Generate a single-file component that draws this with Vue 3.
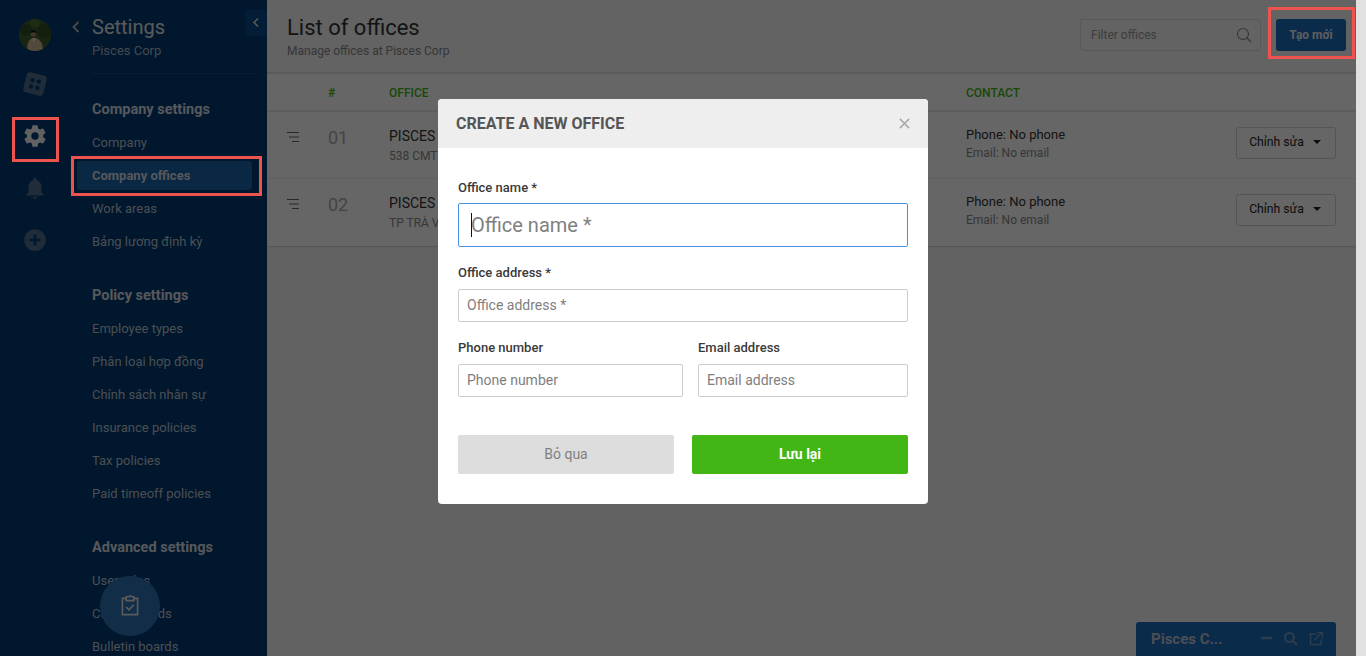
<script setup>
const sections = [
  { title: 'Company settings', items: ['Company', 'Company offices', 'Work areas', 'Bảng lương định kỳ'] },
  { title: 'Policy settings', items: ['Employee types', 'Phân loại hợp đồng', 'Chính sách nhân sự', 'Insurance policies', 'Tax policies', 'Paid timeoff policies'] },
  { title: 'Advanced settings', items: ['User roles', 'Custom fields', 'Bulletin boards'] }
]

const offices = [
  { no: '01', name: 'PISCES CORP', address: '538 CMT8, Quận 3' },
  { no: '02', name: 'PISCES TRÀ VINH', address: 'TP TRÀ VINH' }
]
</script>

<template>
  <div class="page">
    <aside class="rail">
      <svg class="avatar" viewBox="0 0 32 32">
        <circle cx="16" cy="16" r="16" fill="#3f5c2e" />
        <circle cx="7" cy="11" r="6" fill="#2f4c25" />
        <circle cx="25" cy="12" r="7" fill="#334f25" />
        <circle cx="16" cy="4" r="5" fill="#526d35" />
        <clipPath id="avatar-clip"><circle cx="16" cy="16" r="16" /></clipPath>
        <g clip-path="url(#avatar-clip)">
          <path d="M8 32c0-8 2-13 7-13s9 4 9 13z" fill="#c9b696" />
          <path d="M13 19l2 5 2-5z" fill="#e8e2d6" />
        </g>
        <circle cx="14.500" cy="15" r="2.800" fill="#a9826b" />
        <path d="M11.500 14c0-4 6-4 6 0-2-1-4-1-6 0z" fill="#141414" />
      </svg>
      <svg class="rail-icon dim" viewBox="0 0 24 24">
        <g transform="rotate(14 12 12)">
          <rect x="2.500" y="2.500" width="19" height="19" rx="3" fill="currentColor" />
          <circle cx="9" cy="9" r="2" fill="#023a72" />
          <circle cx="15" cy="9" r="2" fill="#023a72" />
          <circle cx="9" cy="15" r="2" fill="#023a72" />
          <circle cx="15" cy="15" r="2" fill="#023a72" />
        </g>
      </svg>
      <svg class="rail-icon gear" viewBox="0 0 24 24">
        <path fill="currentColor" d="M19.430 12.980c.04-.32.07-.64.07-.98s-.03-.66-.07-.98l2.110-1.650c.19-.15.24-.42.12-.64l-2-3.460c-.12-.22-.39-.3-.61-.22l-2.490 1c-.52-.4-1.080-.73-1.690-.98l-.38-2.650C14.460 2.180 14.250 2 14 2h-4c-.25 0-.46.18-.49.42l-.38 2.650c-.61.25-1.170.59-1.690.98l-2.490-1c-.23-.09-.49 0-.61.22l-2 3.460c-.13.22-.07.49.12.64l2.110 1.650c-.04.32-.07.65-.07.98s.03.66.07.98l-2.110 1.650c-.19.15-.24.42-.12.64l2 3.460c.12.22.39.3.61.22l2.490-1c.52.4 1.080.73 1.690.98l.38 2.650c.03.24.24.42.49.42h4c.25 0 .46-.18.49-.42l.38-2.650c.61-.25 1.170-.59 1.690-.98l2.490 1c.23.09.49 0 .61-.22l2-3.460c.12-.22.07-.49-.12-.64l-2.110-1.650zM12 15.500c-1.930 0-3.500-1.570-3.500-3.500s1.570-3.500 3.500-3.500 3.500 1.570 3.500 3.500-1.570 3.500-3.500 3.500z" />
      </svg>
      <svg class="rail-icon dim" viewBox="0 0 24 24">
        <path fill="currentColor" d="M12 22c1.100 0 2-.9 2-2h-4c0 1.100.9 2 2 2zm6-6v-5c0-3.070-1.640-5.640-4.500-6.320V4c0-.83-.67-1.500-1.500-1.500s-1.500.67-1.500 1.500v.68C7.630 5.360 6 7.920 6 11v5l-2 2v1h16v-1l-2-2z" />
      </svg>
      <svg class="rail-icon dim" viewBox="0 0 24 24">
        <circle cx="12" cy="12" r="10" fill="currentColor" />
        <path d="M12 7v10M7 12h10" stroke="#023a72" stroke-width="2.400" />
      </svg>
    </aside>

    <nav class="panel">
      <div class="panel-head">
        <svg class="back" viewBox="0 0 10 14"><path d="M7.500 2 2.500 7l5 5" fill="none" stroke="currentColor" stroke-width="1.800" /></svg>
        <div>
          <div class="panel-title">Settings</div>
          <div class="panel-sub">Pisces Corp</div>
        </div>
        <button class="collapse">
          <svg viewBox="0 0 10 14" width="8" height="11"><path d="M7.500 2 2.500 7l5 5" fill="none" stroke="currentColor" stroke-width="1.800" /></svg>
        </button>
      </div>
      <section v-for="s in sections" :key="s.title" class="nav-section">
        <h3>{{ s.title }}</h3>
        <a v-for="item in s.items" :key="item" class="nav-item" :class="{ active: item === 'Company offices' }">{{ item }}</a>
      </section>
    </nav>

    <main class="main">
      <header class="top">
        <div>
          <h1>List of offices</h1>
          <p>Manage offices at Pisces Corp</p>
        </div>
        <div class="top-actions">
          <div class="filter">
            <span>Filter offices</span>
            <svg viewBox="0 0 16 16" width="16" height="16"><circle cx="7" cy="7" r="5.500" fill="none" stroke="currentColor" stroke-width="1.100" /><path d="m11 11 4 4" stroke="currentColor" stroke-width="1.200" /></svg>
          </div>
          <button class="primary">Tạo mới</button>
        </div>
      </header>

      <div class="table">
        <div class="row head">
          <span class="col-no">#</span>
          <span class="col-office">OFFICE</span>
          <span class="col-contact">CONTACT</span>
        </div>
        <div v-for="o in offices" :key="o.no" class="row body">
          <svg class="handle" viewBox="0 0 12 10" width="12" height="10">
            <path d="M0 .5h12M2 5h10M5 9.500h7" stroke="currentColor" stroke-width="1" />
          </svg>
          <span class="col-no num">{{ o.no }}</span>
          <div class="col-office">
            <div class="name">{{ o.name }}</div>
            <div class="addr">{{ o.address }}</div>
          </div>
          <div class="col-contact">
            <div class="phone">Phone: No phone</div>
            <div class="email">Email: No email</div>
          </div>
          <button class="edit">Chỉnh sửa <i class="caret-down"></i></button>
        </div>
      </div>

      <div class="chat">
        <span>Pisces C...</span>
        <svg viewBox="0 0 63 16" width="63" height="16">
          <path d="M0 7h11" stroke="currentColor" stroke-width="2.500" />
          <circle cx="28.500" cy="6.500" r="4.500" fill="none" stroke="currentColor" stroke-width="2" />
          <path d="m32 10 4 4" stroke="currentColor" stroke-width="2.200" />
          <path d="M55 3h-5.500v10.500H60V8M53 9.500l8-8M56 1.500h5.500V7" fill="none" stroke="currentColor" stroke-width="1.400" />
        </svg>
      </div>
    </main>

    <div class="scrollbar"></div>

    <button class="fab">
      <svg viewBox="0 0 24 24" width="26" height="26">
        <path d="M8.500 5H5v15h14V5h-3.500M8.500 3.500h2.300L12 2.500l1.200 1h2.300V7h-7z" fill="none" stroke="currentColor" stroke-width="1.500" />
        <path d="m8.500 13 2.500 2.500 4.500-4.500" fill="none" stroke="currentColor" stroke-width="1.500" />
      </svg>
    </button>

    <div class="overlay">
      <div class="modal">
        <div class="modal-head">
          <h2>CREATE A NEW OFFICE</h2>
          <svg viewBox="0 0 12 12" width="11" height="11"><path d="m1 1 10 10M11 1 1 11" stroke="currentColor" stroke-width="1.700" /></svg>
        </div>
        <form class="modal-body" @submit.prevent>
          <label>Office name *</label>
          <div class="big-wrap">
            <input class="big" placeholder="Office name *" />
            <i class="text-caret"></i>
          </div>
          <label>Office address *</label>
          <input placeholder="Office address *" />
          <div class="two">
            <div>
              <label>Phone number</label>
              <input placeholder="Phone number" />
            </div>
            <div>
              <label>Email address</label>
              <input placeholder="Email address" />
            </div>
          </div>
          <div class="actions">
            <button class="cancel" type="button">Bỏ qua</button>
            <button class="save" type="submit">Lưu lại</button>
          </div>
        </form>
      </div>
    </div>

    <!-- red note boxes drawn on top of the screenshot -->
    <div class="mark mark-gear"></div>
    <div class="mark mark-item"></div>
    <div class="mark mark-btn"></div>
  </div>
</template>

<style>
html, body {
  margin: 0;
  overflow: hidden;
}
</style>

<style scoped>
* {
  box-sizing: border-box;
}

.page {
  display: flex;
  position: relative;
  width: 1366px;
  height: 656px;
  overflow: hidden;
  font-family: Roboto, sans-serif;
  background: #f5f5f5;
  color: #333;
}

.rail {
  width: 70px;
  flex: none;
  background: #023a72;
  display: flex;
  flex-direction: column;
  align-items: center;
  padding-top: 19px;
}

.avatar {
  width: 32px;
  height: 32px;
  margin-bottom: 20px;
}

.rail-icon {
  width: 26px;
  height: 26px;
  margin-bottom: 26px;
}

.rail-icon.dim {
  color: #506f90;
}

.rail-icon.gear {
  color: #f2f2f2;
}

.panel {
  width: 197px;
  flex: none;
  background: #023a72;
  color: #d8dce2;
  font-size: 13px;
}

.panel-head {
  position: relative;
  display: flex;
  margin-left: 22px;
  margin-right: 10px;
  height: 74px;
  padding-top: 15px;
  border-bottom: 1px solid #134c86;
}

.back {
  position: absolute;
  left: -21px;
  top: 20px;
  width: 10px;
  height: 14px;
  color: #bbb;
}

.panel-title {
  font-size: 20px;
  line-height: 24px;
  color: #e2e2e2;
}

.panel-sub {
  font-size: 13px;
  line-height: 18px;
  margin-top: 3px;
  color: #a9b4c2;
}

.collapse {
  position: absolute;
  right: -10px;
  top: 10px;
  width: 22px;
  height: 26px;
  padding: 0;
  border: 0;
  border-radius: 3px;
  background: #0c4a88;
  color: #e6e6e6;
}

.nav-section {
  margin-bottom: 30px;
}

.nav-section h3 {
  margin: 26px 0 0;
  padding-left: 22px;
  font-size: 14.500px;
  line-height: 20px;
  font-weight: 700;
}

.nav-item {
  display: block;
  height: 29px;
  margin: 4px 15px 0 7px;
  padding-left: 15px;
  line-height: 29px;
  border-radius: 3px;
  color: #bcc3cd;
}

.nav-section h3 + .nav-item {
  margin-top: 8px;
}

.nav-item.active {
  background: #1b62a8;
  color: #d8dce2;
  font-weight: 700;
}

.main {
  flex: 1;
  position: relative;
  min-width: 0;
}

.top {
  display: flex;
  justify-content: space-between;
  height: 74px;
  padding: 15px 10px 0 20px;
  background: #f7f7f7;
  border-bottom: 2px solid #e2e2e2;
}

.top h1 {
  margin: 0;
  font-size: 22px;
  line-height: 26px;
  font-weight: 400;
  color: #333;
}

.top p {
  margin: 2px 0 0;
  font-size: 12px;
  line-height: 16px;
  color: #888;
}

.top-actions {
  display: flex;
  gap: 15px;
  margin-top: 4px;
  height: 32px;
}

.filter {
  width: 181px;
  display: flex;
  justify-content: space-between;
  align-items: center;
  padding: 0 8px 0 10px;
  border: 1px solid #dcdcdc;
  border-radius: 3px;
  font-size: 12px;
  color: #999;
}

.filter svg {
  color: #888;
}

.primary {
  width: 70px;
  border: 0;
  border-radius: 3px;
  background: #1d6bb8;
  color: #e8e8e8;
  font: 700 12px Roboto, sans-serif;
}

.table {
  background: #fff;
  box-shadow: 0 1px 1px rgba(0, 0, 0, 0.1);
}

.row {
  display: flex;
  align-items: center;
  position: relative;
  padding-left: 61px;
}

.row.head {
  height: 38px;
  padding-top: 1px;
  border-bottom: 2px solid #e8e8e8;
  font-size: 12px;
  font-weight: 500;
  color: #3fb618;
}

.row.body {
  height: 67px;
  align-items: flex-start;
  padding-top: 15px;
  border-bottom: 1px solid #eee;
}

.row.body:last-child {
  border-bottom: 0;
}

.col-no {
  width: 61px;
  flex: none;
}

.col-office {
  width: 577px;
  flex: none;
}

.handle {
  position: absolute;
  left: 20px;
  top: 20px;
  color: #666;
}

.num {
  font-size: 18px;
  line-height: 22px;
  color: #aaa;
}

.name {
  font-size: 14px;
  line-height: 18px;
  margin-bottom: 3px;
}

.addr {
  font-size: 12px;
  line-height: 16px;
  color: #888;
}

.phone {
  font-size: 13px;
  line-height: 16px;
  margin-bottom: 2px;
}

.email {
  font-size: 12px;
  line-height: 16px;
  color: #888;
}

.edit {
  position: absolute;
  right: 20px;
  top: 15px;
  width: 100px;
  height: 32px;
  padding: 0 2px 2px 0;
  background: transparent;
  border: 1px solid #d4d4d4;
  border-radius: 3px;
  color: #222;
  font: 400 12.200px Roboto, sans-serif;
}

.caret-down {
  display: inline-block;
  margin-left: 6px;
  vertical-align: 2px;
  border: 4px solid transparent;
  border-top: 4px solid #222;
  border-bottom: 0;
}

.chat {
  position: absolute;
  right: 20px;
  bottom: 0;
  width: 200px;
  height: 34px;
  display: flex;
  justify-content: space-between;
  align-items: center;
  padding: 0 12px 0 15px;
  background: #1d6bb8;
  border-radius: 3px 3px 0 0;
  color: #bcc4ce;
  font-size: 15px;
  font-weight: 700;
}

.chat svg {
  color: #7198c0;
}

.scrollbar {
  width: 10px;
  flex: none;
  background: #e1e1e1;
  position: relative;
  z-index: 3;
}

.fab {
  position: absolute;
  left: 100px;
  top: 576px;
  width: 60px;
  height: 60px;
  padding: 0;
  display: flex;
  align-items: center;
  justify-content: center;
  border: 0;
  border-radius: 50%;
  background: #2f72b4;
  color: #e4e4e4;
}

.overlay {
  position: absolute;
  inset: 0;
  z-index: 2;
  background: rgba(0, 0, 0, 0.6);
  display: flex;
  justify-content: center;
  align-items: flex-start;
  padding-top: 99px;
}

.modal {
  width: 490px;
  height: 405px;
  background: #fff;
  border-radius: 4px;
  overflow: hidden;
}

.modal-head {
  height: 49px;
  background: #eee;
  display: flex;
  justify-content: space-between;
  align-items: center;
  padding: 0 18px;
  color: #aaa;
}

.modal-head h2 {
  margin: 0;
  font-size: 16px;
  font-weight: 700;
  color: #555;
}

.modal-body {
  padding: 32px 20px 0;
}

label {
  display: block;
  font-size: 13px;
  line-height: 15px;
  font-weight: 500;
  color: #3a3a3a;
  margin-bottom: 9px;
}

input {
  display: block;
  width: 100%;
  height: 33px;
  padding: 0 8px 2px;
  border: 1px solid #ccc;
  border-radius: 2px;
  outline: 0;
  font: 14px Roboto, sans-serif;
  color: #333;
}

input::placeholder {
  color: #808080;
  opacity: 1;
}

.big-wrap {
  position: relative;
  margin-top: -1px;
  margin-bottom: 18px;
}

input.big {
  height: 44px;
  padding: 0 12px;
  font-size: 20px;
  border-color: #4a90e2;
}

.text-caret {
  position: absolute;
  left: 13px;
  top: 10px;
  width: 1px;
  height: 24px;
  background: #111;
}

.two {
  display: grid;
  grid-template-columns: 225px 210px;
  column-gap: 15px;
  margin-top: 18px;
}

.actions {
  display: flex;
  justify-content: space-between;
  margin-top: 38px;
}

.actions button {
  width: 216px;
  height: 39px;
  padding: 0 0 2px;
  border: 0;
  border-radius: 2px;
  font: 14px Roboto, sans-serif;
}

.cancel {
  background: #ddd;
  color: #808080;
}

.actions .save {
  background: #41b614;
  color: #fff;
  font-weight: 700;
}

.mark {
  position: absolute;
  z-index: 4;
  border: 3px solid #ef5350;
}

.mark-gear {
  left: 12px;
  top: 117px;
  width: 47px;
  height: 45px;
}

.mark-item {
  left: 71px;
  top: 156px;
  width: 191px;
  height: 40px;
}

.mark-btn {
  left: 1268px;
  top: 7px;
  width: 87px;
  height: 52px;
}
</style>
